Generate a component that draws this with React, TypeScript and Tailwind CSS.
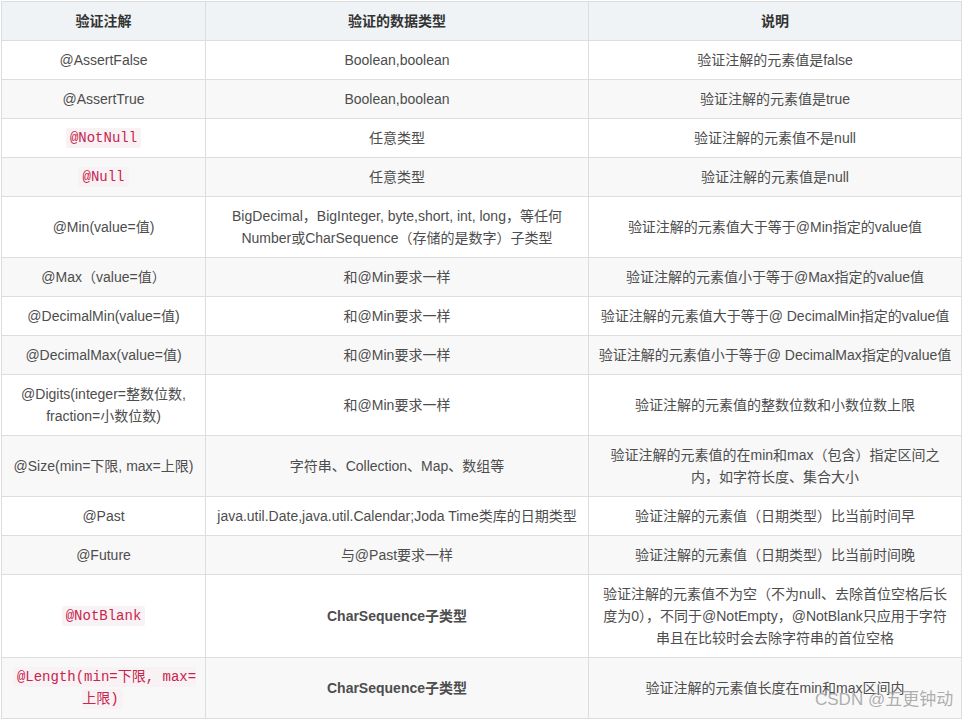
import React from 'react';

type Row = {
  name: React.ReactNode;
  type: React.ReactNode;
  desc: React.ReactNode;
};

const Code: React.FC<{ children: React.ReactNode }> = ({ children }) => (
  <code className="mx-[2px] rounded-[2px] bg-[#f9f2f4] px-1 py-[2px] align-top text-[14px] leading-[22px] text-[#c7254e] [font-family:'Liberation_Mono','Noto_Sans_CJK_SC',monospace]">
    {children}
  </code>
);

const rows: Row[] = [
  { name: '@AssertFalse', type: 'Boolean,boolean', desc: '验证注解的元素值是false' },
  { name: '@AssertTrue', type: 'Boolean,boolean', desc: '验证注解的元素值是true' },
  { name: <Code>@NotNull</Code>, type: '任意类型', desc: '验证注解的元素值不是null' },
  { name: <Code>@Null</Code>, type: '任意类型', desc: '验证注解的元素值是null' },
  {
    name: '@Min(value=值)',
    type: (
      <>
        BigDecimal，BigInteger, byte,short, int, long，等任何
        <br />
        Number或CharSequence（存储的是数字）子类型
      </>
    ),
    desc: '验证注解的元素值大于等于@Min指定的value值',
  },
  { name: '@Max（value=值）', type: '和@Min要求一样', desc: '验证注解的元素值小于等于@Max指定的value值' },
  { name: '@DecimalMin(value=值)', type: '和@Min要求一样', desc: '验证注解的元素值大于等于@ DecimalMin指定的value值' },
  { name: '@DecimalMax(value=值)', type: '和@Min要求一样', desc: '验证注解的元素值小于等于@ DecimalMax指定的value值' },
  {
    name: (
      <>
        @Digits(integer=整数位数,
        <br />
        fraction=小数位数)
      </>
    ),
    type: '和@Min要求一样',
    desc: '验证注解的元素值的整数位数和小数位数上限',
  },
  {
    name: '@Size(min=下限, max=上限)',
    type: '字符串、Collection、Map、数组等',
    desc: (
      <>
        验证注解的元素值的在min和max（包含）指定区间之
        <br />
        内，如字符长度、集合大小
      </>
    ),
  },
  { name: '@Past', type: 'java.util.Date,java.util.Calendar;Joda Time类库的日期类型', desc: '验证注解的元素值（日期类型）比当前时间早' },
  { name: '@Future', type: '与@Past要求一样', desc: '验证注解的元素值（日期类型）比当前时间晚' },
  {
    name: <Code>@NotBlank</Code>,
    type: <strong>CharSequence子类型</strong>,
    desc: (
      <>
        验证注解的元素值不为空（不为null、去除首位空格后长
        <br />
        度为0），不同于@NotEmpty，@NotBlank只应用于字符
        <br />
        串且在比较时会去除字符串的首位空格
      </>
    ),
  },
  {
    name: (
      <Code>
        @Length(min=下限, max=
        <br />
        上限)
      </Code>
    ),
    type: <strong>CharSequence子类型</strong>,
    desc: '验证注解的元素值长度在min和max区间内',
  },
];

const App: React.FC = () => {
  return (
    <div className="relative min-h-[720px] bg-white pl-px pt-px [font-family:'Liberation_Sans','Noto_Sans_CJK_SC',sans-serif]">
      <table className="table-fixed border-collapse text-[14px] leading-[22px] text-[#4d4d4d]">
        <colgroup>
          <col className="w-[204px]" />
          <col className="w-[383px]" />
          <col className="w-[373px]" />
        </colgroup>
        <thead>
          <tr className="bg-[#eff3f5]">
            <th className="border border-[#dddddd] px-2 py-2 text-center font-bold text-[#333333]">验证注解</th>
            <th className="border border-[#dddddd] px-2 py-2 text-center font-bold text-[#333333]">验证的数据类型</th>
            <th className="border border-[#dddddd] px-2 py-2 text-center font-bold text-[#333333]">说明</th>
          </tr>
        </thead>
        <tbody>
          {rows.map((row, i) => (
            <tr key={i} className={i % 2 === 1 ? 'bg-[#f8f8f8]' : 'bg-white'}>
              <td className="whitespace-nowrap border border-[#dddddd] px-2 py-2 text-center">{row.name}</td>
              <td className="whitespace-nowrap border border-[#dddddd] px-2 py-2 text-center">{row.type}</td>
              <td className="whitespace-nowrap border border-[#dddddd] px-1 py-2 text-center">{row.desc}</td>
            </tr>
          ))}
        </tbody>
      </table>
      <div className="absolute left-[815px] top-[689px] text-[17px] leading-[22px] text-[#9a9a9a]/80">
        CSDN @五更钟动
      </div>
    </div>
  );
};

export default App;
